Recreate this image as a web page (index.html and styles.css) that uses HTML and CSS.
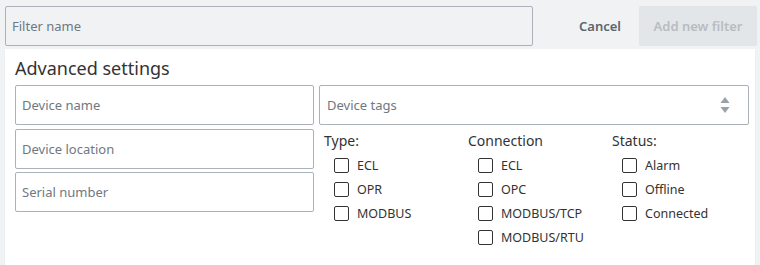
FILE: index.html
```html
<!DOCTYPE html>
<html>
<head>
<meta name="viewport" content="width=device-width, initial-scale=1">
<link rel="stylesheet" href="styles.css">
</head>
<body>
<div class="topBar">
  <input class="filterName" type="text" placeholder="Filter name">
  <button class="cancel">Cancel</button>
  <button class="addFilter" disabled>Add new filter</button>
</div>

<div class="panel">
  <h3>Advanced settings</h3>
  <div class="fields">
    <div class="leftCol">
      <input class="field" type="text" placeholder="Device name">
      <input class="field" type="text" placeholder="Device location">
      <input class="field" type="text" placeholder="Serial number">
    </div>
    <div class="rightCol">
      <div class="tags">
        <span>Device tags</span>
        <svg width="10" height="17" viewBox="0 0 10 17">
          <path d="M5 0 L9.5 6 L0.5 6 Z" fill="#9aa1a8"/>
          <path d="M5 16 L9.5 10 L0.5 10 Z" fill="#9aa1a8"/>
        </svg>
      </div>
      <div class="groups">
        <div class="group">
          <div class="groupTitle">Type:</div>
          <label class="check"><span class="box"></span>ECL</label>
          <label class="check"><span class="box"></span>OPR</label>
          <label class="check"><span class="box"></span>MODBUS</label>
        </div>
        <div class="group">
          <div class="groupTitle">Connection</div>
          <label class="check"><span class="box"></span>ECL</label>
          <label class="check"><span class="box"></span>OPC</label>
          <label class="check"><span class="box"></span>MODBUS/TCP</label>
          <label class="check"><span class="box"></span>MODBUS/RTU</label>
        </div>
        <div class="group">
          <div class="groupTitle">Status:</div>
          <label class="check"><span class="box"></span>Alarm</label>
          <label class="check"><span class="box"></span>Offline</label>
          <label class="check"><span class="box"></span>Connected</label>
        </div>
      </div>
    </div>
  </div>
</div>
</body>
</html>
```

FILE: styles.css
```css
body {
  margin: 0;
  padding: 6px 5px 0 5px;
  background-color: #f0f2f4;
  font-family: "Noto Sans", sans-serif;
  color: #333;
}

/* Top bar */
.topBar {
  display: flex;
  align-items: center;
  height: 40px;
}

.filterName {
  box-sizing: border-box;
  flex-shrink: 0;
  width: 528px;
  height: 40px;
  border: 1px solid #aab1b8;
  border-radius: 2px;
  background-color: #f0f2f4;
  padding: 0 6px;
  font-family: inherit;
  font-size: 13px;
  outline: none;
}

.filterName::placeholder,
.field::placeholder {
  color: #6f7882;
}

.cancel {
  margin-left: 28px;
  padding: 0 18px;
  height: 40px;
  border: none;
  background: none;
  font-family: inherit;
  font-size: 13px;
  font-weight: 600;
  color: #5b6570;
}

.addFilter {
  margin-left: auto;
  flex-shrink: 0;
  width: 118px;
  height: 40px;
  border: none;
  border-radius: 2px;
  background-color: #e3e6e9;
  font-family: inherit;
  font-size: 13px;
  font-weight: 600;
  color: #b7bcc1;
}

/* Advanced panel */
.panel {
  margin-top: 3px;
  background-color: #fff;
  padding: 9px 6px 18px 10px;
  box-shadow: 0 1px 1px #e0e3e6;
}

.panel h3 {
  margin: 0 0 7px 0;
  font-size: 18px;
  font-weight: 400;
  line-height: 20px;
  color: #333;
}

.fields {
  display: flex;
  gap: 5px;
}

.leftCol {
  display: flex;
  flex-direction: column;
  flex-shrink: 0;
  gap: 4px;
  width: 299px;
}

.field {
  box-sizing: border-box;
  height: 40px;
  border: 1px solid #aab1b8;
  border-radius: 2px;
  padding: 0 6px;
  font-family: inherit;
  font-size: 13px;
  outline: none;
}

.field:last-child {
  margin-top: -1px;
}

.rightCol {
  flex: 1;
  min-width: 0;
}

.tags {
  box-sizing: border-box;
  height: 40px;
  border: 1px solid #aab1b8;
  border-radius: 2px;
  display: flex;
  align-items: center;
  justify-content: space-between;
  padding: 0 18px 0 7px;
  font-size: 13px;
  color: #6f7882;
}

.groups {
  display: flex;
  padding: 6px 0 0 5px;
}

.group {
  flex-shrink: 0;
  width: 144px;
}

.groupTitle {
  font-size: 14px;
  line-height: 20px;
  margin-bottom: 2px;
}

.check {
  display: flex;
  align-items: center;
  height: 24px;
  padding-left: 10px;
  font-size: 12.5px;
  color: #333;
}

.box {
  box-sizing: border-box;
  width: 15px;
  height: 15px;
  border: 1px solid #333;
  border-radius: 2px;
  margin-right: 8px;
}
```
